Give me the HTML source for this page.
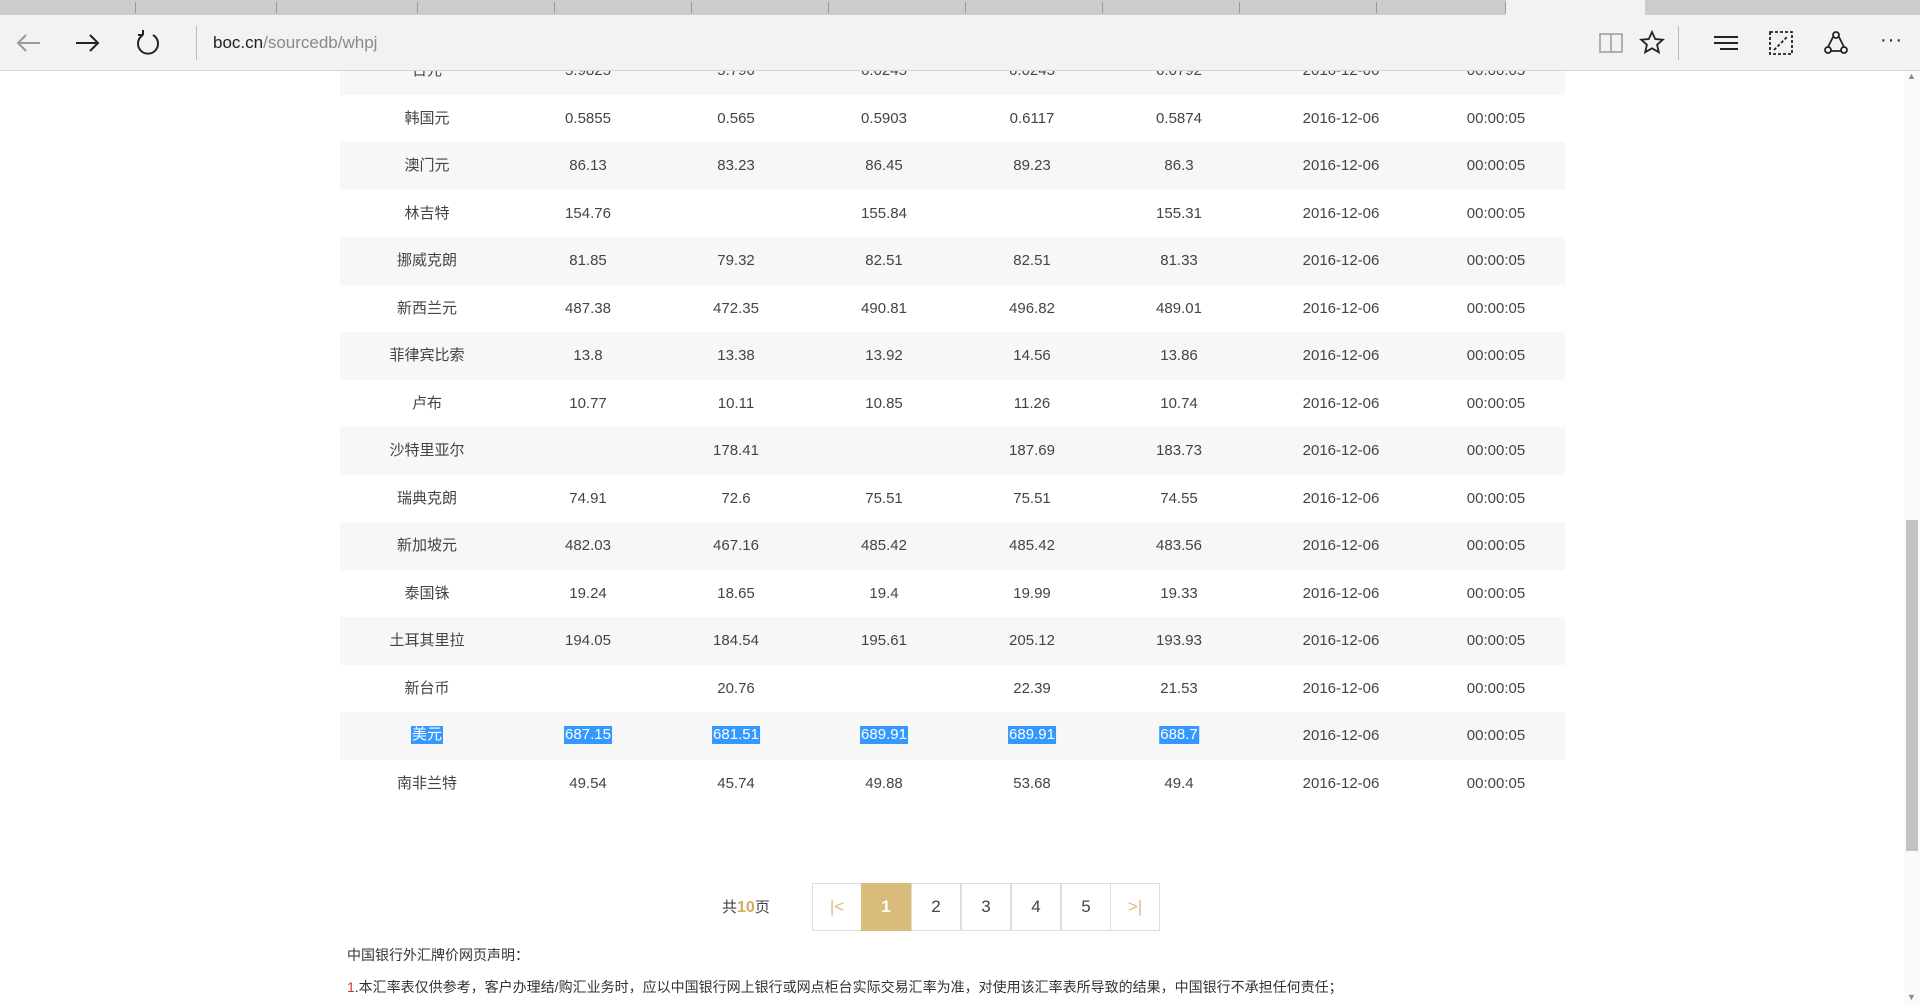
<!DOCTYPE html>
<html><head><meta charset="utf-8"><style>
*{margin:0;padding:0;box-sizing:border-box}
body{width:1920px;height:1004px;overflow:hidden;background:#fff;font-family:"Liberation Sans","Noto Sans CJK SC",sans-serif;position:relative;color:#444}
.tabs{position:absolute;left:0;top:0;width:1920px;height:15px;background:#cccccc;z-index:10}
.tab{position:absolute;top:2px;height:11px;border-right:1px solid #999}
.act{position:absolute;left:1506px;top:0;width:139px;height:15px;background:#f2f2f2}
.bar{position:absolute;left:0;top:15px;width:1920px;height:56px;background:#f2f2f2;border-bottom:1px solid #d4d4d4;z-index:10}
.url{position:absolute;left:213px;top:18px;font-size:17px;color:#222}
.url span{color:#888}
.ic{position:absolute;top:14px}
.vd{position:absolute;top:11px;width:1px;height:34px;background:#bbb}
.row{position:absolute;left:340px;width:1225px;height:47.5px;font-size:15px}
.row.g{background:#f7f7f7}
.c{position:absolute;top:0;line-height:47.5px;transform:translateX(-50%);white-space:nowrap}
.sel{background:#3399ff;color:#fff;line-height:18px;top:14px;padding:0 1px}
.sb{position:absolute;left:1904px;top:71px;width:16px;height:933px;background:#fafafa}
.thumb{position:absolute;left:1906px;top:520px;width:12px;height:331px;background:#c2c2c2}
.pg{position:absolute;top:883px;height:48px;width:50px;border:1px solid #ddd;text-align:center;line-height:46px;font-size:17px;color:#444;background:#fff}
</style></head><body>
<div class="tabs">
<div class="tab" style="left:0;width:136px"></div><div class="tab" style="left:136px;width:141px"></div><div class="tab" style="left:277px;width:141px"></div><div class="tab" style="left:418px;width:137px"></div><div class="tab" style="left:555px;width:137px"></div><div class="tab" style="left:692px;width:137px"></div><div class="tab" style="left:829px;width:137px"></div><div class="tab" style="left:966px;width:137px"></div><div class="tab" style="left:1103px;width:137px"></div><div class="tab" style="left:1240px;width:137px"></div><div class="tab" style="left:1377px;width:129px"></div>
<div class="act"></div>
</div>
<div class="bar">
<svg class="ic" style="left:14px" width="28" height="28" viewBox="0 0 28 28" fill="none" stroke="#999" stroke-width="2"><path d="M4 14h22M12 6l-8 8 8 8"/></svg>
<svg class="ic" style="left:74px" width="28" height="28" viewBox="0 0 28 28" fill="none" stroke="#222" stroke-width="2"><path d="M2 14h22M16 6l8 8-8 8"/></svg>
<svg class="ic" style="left:134px" width="28" height="28" viewBox="0 0 28 28" fill="none" stroke="#222" stroke-width="2"><path d="M19 6a10 10 0 1 1-10 0M9 6V1M9 6H4"/></svg>
<div class="vd" style="left:196px"></div>
<div class="url">boc.cn<span>/sourcedb/whpj</span></div>
<svg class="ic" style="left:1598px" width="26" height="28" viewBox="0 0 26 28" fill="none" stroke="#999" stroke-width="1.5"><rect x="2" y="5" width="22" height="18"/><path d="M13 5v18"/></svg>
<svg class="ic" style="left:1638px" width="28" height="28" viewBox="0 0 28 28" fill="none" stroke="#222" stroke-width="1.8"><path d="M14 3l3.2 7 7.6.7-5.7 5 1.7 7.5L14 19.3 7.2 23.2 8.9 15.7 3.2 10.7l7.6-.7z"/></svg>
<div class="vd" style="left:1678px"></div>
<svg class="ic" style="left:1712px" width="28" height="28" viewBox="0 0 28 28" fill="none" stroke="#222" stroke-width="2"><path d="M2 8h24M2 14h24M8 20h18"/></svg>
<svg class="ic" style="left:1767px" width="28" height="28" viewBox="0 0 28 28" fill="none" stroke="#222" stroke-width="1.8"><path d="M3 3h22v22H3zM7 21L21 7" stroke-dasharray="3 2"/></svg>
<svg class="ic" style="left:1822px" width="28" height="28" viewBox="0 0 28 28" fill="none" stroke="#222" stroke-width="1.8"><circle cx="14" cy="6" r="3"/><circle cx="6" cy="21" r="3"/><circle cx="22" cy="21" r="3"/><path d="M11 8l-5 10M17 8l5 10M9 22h10"/></svg>
<div style="position:absolute;left:1880px;top:14px;font-size:20px;color:#222;letter-spacing:1px">···</div>
</div>

<div class="row g" style="top:47px"><span class="c" style="left:87px">日元</span><span class="c" style="left:248px">5.9825</span><span class="c" style="left:396px">5.796</span><span class="c" style="left:544px">6.0245</span><span class="c" style="left:692px">6.0245</span><span class="c" style="left:839px">6.0792</span><span class="c" style="left:1001px">2016-12-06</span><span class="c" style="left:1156px">00:00:05</span></div>

<div id="rows"></div>
<script>
var d=[["韩国元","0.5855","0.565","0.5903","0.6117","0.5874"],["澳门元","86.13","83.23","86.45","89.23","86.3"],["林吉特","154.76","","155.84","","155.31"],["挪威克朗","81.85","79.32","82.51","82.51","81.33"],["新西兰元","487.38","472.35","490.81","496.82","489.01"],["菲律宾比索","13.8","13.38","13.92","14.56","13.86"],["卢布","10.77","10.11","10.85","11.26","10.74"],["沙特里亚尔","","178.41","","187.69","183.73"],["瑞典克朗","74.91","72.6","75.51","75.51","74.55"],["新加坡元","482.03","467.16","485.42","485.42","483.56"],["泰国铢","19.24","18.65","19.4","19.99","19.33"],["土耳其里拉","194.05","184.54","195.61","205.12","193.93"],["新台币","","20.76","","22.39","21.53"],["美元","687.15","681.51","689.91","689.91","688.7"],["南非兰特","49.54","45.74","49.88","53.68","49.4"]];
var xs=[87,248,396,544,692,839],h="";
d.forEach(function(r,i){var k=i+1,top=47+47.5*k,sel=r[0]=="美元";h+='<div class="row'+(k%2==0?' g':'')+'" style="top:'+top+'px">';
r.forEach(function(v,j){h+='<span class="c'+(sel?' sel':'')+'" style="left:'+xs[j]+'px">'+v+'</span>'});
h+='<span class="c" style="left:1001px">2016-12-06</span><span class="c" style="left:1156px">00:00:05</span></div>'});
document.getElementById('rows').innerHTML=h;
</script>

<div style="position:absolute;left:722px;top:896px;font-size:15px;color:#444">共<b style="color:#d4ad5a;font-size:16px">10</b>页</div>
<div class="pg" style="left:812px;color:#d9bc7b">|&lt;</div>
<div class="pg" style="left:861px;background:#d9bc7b;color:#fff;border-color:#d9bc7b;font-weight:bold">1</div>
<div class="pg" style="left:911px">2</div>
<div class="pg" style="left:961px">3</div>
<div class="pg" style="left:1011px">4</div>
<div class="pg" style="left:1061px">5</div>
<div class="pg" style="left:1110px;color:#d9bc7b">&gt;|</div>

<div style="position:absolute;left:347px;top:945px;font-size:14px;color:#333">中国银行外汇牌价网页声明：</div>
<div style="position:absolute;left:347px;top:977px;font-size:14px;color:#333"><span style="color:#c33">1</span>.本汇率表仅供参考，客户办理结/购汇业务时，应以中国银行网上银行或网点柜台实际交易汇率为准，对使用该汇率表所导致的结果，中国银行不承担任何责任；</div>

<div class="sb"></div><div class="thumb"></div>
<div style="position:absolute;left:1907px;top:71px;font-size:9px;color:#888">▲</div>
<div style="position:absolute;left:1907px;top:992px;font-size:9px;color:#888">▼</div>
</body></html>
